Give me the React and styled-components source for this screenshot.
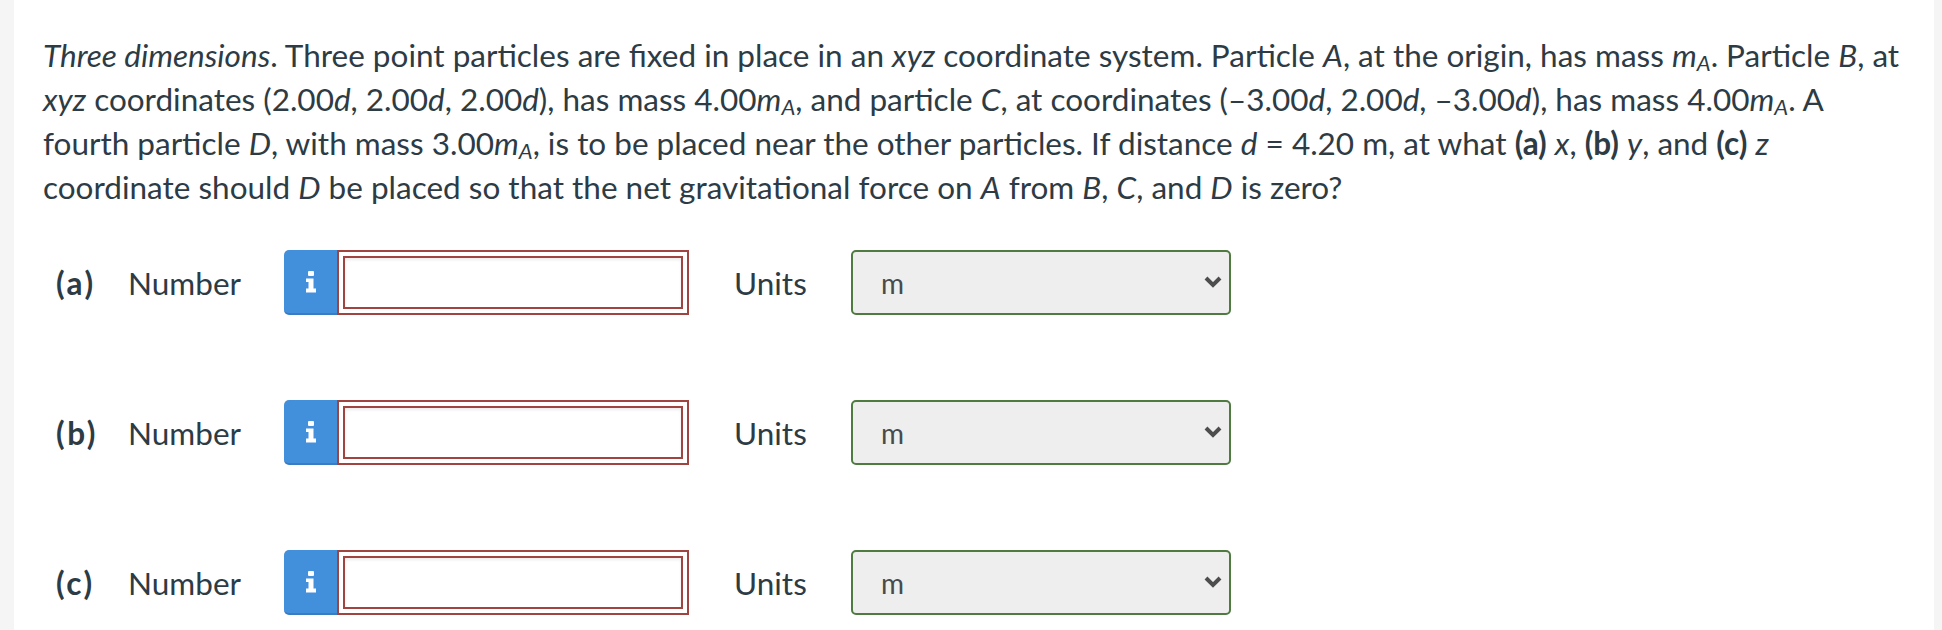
import styled, {createGlobalStyle} from "styled-components";

const GlobalStyle = createGlobalStyle`
  html, body {
    margin: 0;
    padding: 0;
    background: #f5f5f5;
  }
  body {
    font-family: Lato, "Open Sans", sans-serif;
    color: #2d3b45;
  }
`;

const parts = ["a", "b", "c"];

function Sub({children}) {
  return <StyledSub>{children}</StyledSub>;
}

function Mass() {
  return (
    <i>
      m<Sub>A</Sub>
    </i>
  );
}

function InfoIcon() {
  return (
    <svg width="12" height="22" viewBox="0 0 12 22" fill="#fff">
      <rect x="3" y="0" width="6" height="5" rx="1" />
      <path d="M1 7.5 H8.5 V17.5 H11 V21.5 H1 V17.5 H3.5 V11 H1 Z" />
    </svg>
  );
}

function Chevron() {
  return (
    <StyledChevron width="18" height="12" viewBox="0 0 18 12">
      <path
        d="M2 2 L9 9 L16 2"
        fill="none"
        stroke="#4d4d4d"
        strokeWidth="4"
      />
    </StyledChevron>
  );
}

export default function App() {
  return (
    <>
      <GlobalStyle />
      <StyledPage>
        <StyledQuestion>
          <i>Three dimensions</i>. Three point particles are fixed in place in
          an <i>xyz</i> coordinate system. Particle <i>A</i>, at the origin, has
          mass <Mass />. Particle <i>B</i>, at
          <br />
          <i>xyz</i> coordinates (2.00<i>d</i>, 2.00<i>d</i>, 2.00<i>d</i>), has
          mass 4.00<Mass />, and particle <i>C</i>, at coordinates (–3.00
          <i>d</i>, 2.00<i>d</i>, –3.00<i>d</i>), has mass 4.00<Mass />. A
          <br />
          fourth particle <i>D</i>, with mass 3.00<Mass />, is to be placed near
          the other particles. If distance <i>d</i> = 4.20 m, at what{" "}
          <b>(a)</b> <i>x</i>, <b>(b)</b> <i>y</i>, and <b>(c)</b> <i>z</i>
          <br />
          coordinate should <i>D</i> be placed so that the net gravitational
          force on <i>A</i> from <i>B</i>, <i>C</i>, and <i>D</i> is zero?
        </StyledQuestion>

        <StyledAnswers>
          {parts.map(part => (
            <StyledRow key={part}>
              <StyledPartLabel>({part})</StyledPartLabel>
              <StyledFieldLabel>Number</StyledFieldLabel>
              <StyledInfoButton type="button" aria-label="info">
                <InfoIcon />
              </StyledInfoButton>
              <StyledInputFrame>
                <StyledInput type="text" aria-label={`answer ${part}`} />
              </StyledInputFrame>
              <StyledUnitsLabel>Units</StyledUnitsLabel>
              <StyledSelectWrap>
                <StyledSelect defaultValue="m" aria-label={`units ${part}`}>
                  <option value="m">m</option>
                </StyledSelect>
                <Chevron />
              </StyledSelectWrap>
            </StyledRow>
          ))}
        </StyledAnswers>
      </StyledPage>
    </>
  );
}

const StyledPage = styled.main`
  margin: 0 8px 0 14px;
  min-height: 630px;
  box-sizing: border-box;
  padding: 33px 29px 0 29px;
  background: #ffffff;
`;

const StyledQuestion = styled.p`
  margin: 0;
  font-size: 31.5px;
  line-height: 44px;
  white-space: nowrap;

  b {
    font-weight: 700;
  }
`;

const StyledSub = styled.sub`
  font-size: 22px;
  line-height: 0;
  vertical-align: -0.2em;
`;

const StyledAnswers = styled.div`
  display: flex;
  flex-direction: column;
  gap: 85px;
  margin-top: 41px;
  padding-left: 13px;
`;

const StyledRow = styled.div`
  display: flex;
  align-items: center;
  height: 65px;
  font-size: 31.5px;
`;

const StyledPartLabel = styled.span`
  width: 72px;
  font-weight: 700;
  letter-spacing: 2.5px;
`;

const StyledFieldLabel = styled.span`
  width: 156px;
`;

const StyledInfoButton = styled.button`
  display: flex;
  align-items: center;
  justify-content: center;
  width: 53px;
  height: 65px;
  padding: 0;
  border: none;
  border-bottom: 2px solid #3a7cc4;
  border-radius: 5px 0 0 5px;
  background: #428fdc;
  box-sizing: border-box;
`;

const StyledInputFrame = styled.div`
  box-sizing: border-box;
  width: 352px;
  height: 65px;
  padding: 4px;
  border: 2px solid #a0443f;
  background: #ffffff;
`;

const StyledInput = styled.input`
  box-sizing: border-box;
  width: 100%;
  height: 100%;
  margin: 0;
  border: 2px solid #a0443f;
  background: #ffffff;
  box-shadow: inset 0 2px 3px rgba(0, 0, 0, 0.08);
  font-family: Lato, sans-serif;
  font-size: 26px;
  outline: none;
`;

const StyledUnitsLabel = styled.span`
  width: 117px;
  margin-left: 45px;
`;

const StyledSelectWrap = styled.div`
  position: relative;
  width: 380px;
  height: 65px;
`;

const StyledSelect = styled.select`
  appearance: none;
  box-sizing: border-box;
  width: 100%;
  height: 100%;
  margin: 0;
  padding: 0 0 0 28px;
  border: 2px solid #4f7a40;
  border-radius: 5px;
  background: #eeeeee;
  color: #4a4a4a;
  font-family: Lato, sans-serif;
  font-size: 28px;
`;

const StyledChevron = styled.svg`
  position: absolute;
  top: 26px;
  right: 9px;
  pointer-events: none;
`;
